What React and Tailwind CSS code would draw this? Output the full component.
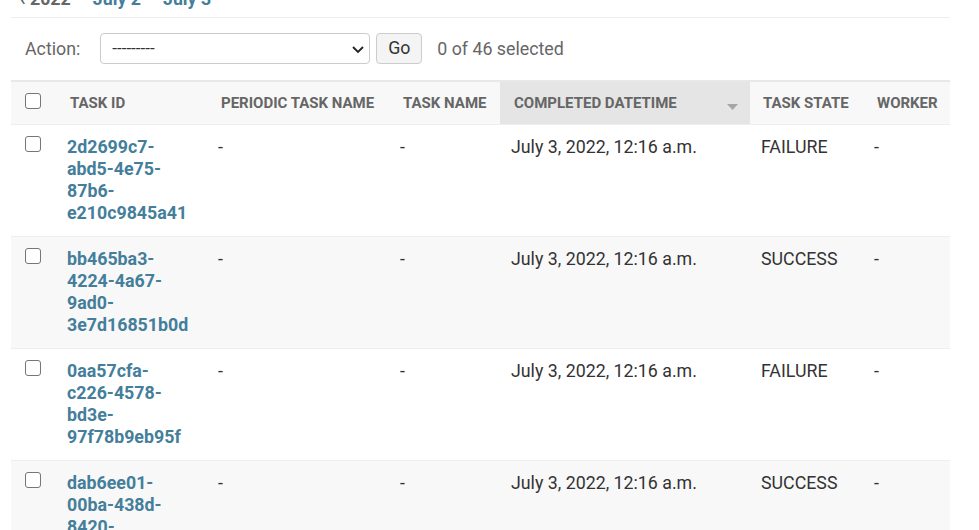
import React from "react";

const rows = [
  { id: "2d2699c7-abd5-4e75-87b6-e210c9845a41", state: "FAILURE" },
  { id: "bb465ba3-4224-4a67-9ad0-3e7d16851b0d", state: "SUCCESS" },
  { id: "0aa57cfa-c226-4578-bd3e-97f78b9eb95f", state: "FAILURE" },
  { id: "dab6ee01-00ba-438d-8420-5c2b1e9a7f34", state: "SUCCESS" },
];

function Box() {
  return (
    <span className="block w-4 h-4 rounded-[3px] border-[1.5px] border-[#767676] bg-white" />
  );
}

export default function App() {
  return (
    <div
      className="min-h-[530px] bg-white text-[#333] overflow-hidden"
      style={{ fontFamily: "Roboto, 'Noto Sans', sans-serif" }}
    >
      <div className="ml-[11px] w-[939px]">
        {/* date hierarchy */}
        <div className="-mt-[12px] h-[30px] border-b border-[#eee] pl-[9px] flex gap-[22px] text-[17.8px] leading-[22px] font-bold">
          <span className="text-[#666]">‹ 2022</span>
          <span className="text-[#447e9b]">July 2</span>
          <span className="text-[#447e9b]">July 3</span>
        </div>

        {/* actions */}
        <div className="h-[62px] flex items-center pl-[14px] text-[17.8px] text-[#666]">
          <span>Action:</span>
          <div className="relative ml-[20px] w-[270px] h-[31px] mt-[-1px]">
            <select className="appearance-none w-full h-full border border-[#ccc] rounded-[4px] bg-white pl-[11px] text-[17px] text-[#333] outline-none">
              <option>---------</option>
            </select>
            <svg
              className="absolute right-[5px] top-[12px] pointer-events-none"
              width="14"
              height="9"
              viewBox="0 0 14 9"
            >
              <path d="M2 2 L7 7 L12 2" fill="none" stroke="#222" strokeWidth="1.8" />
            </svg>
          </div>
          <button className="ml-[6px] w-[46px] h-[31px] mt-[-1px] border border-[#ccc] rounded-[4px] bg-[#f4f4f4] text-[17.8px] text-[#333]">
            Go
          </button>
          <span className="ml-[15px]">0 of 46 selected</span>
        </div>

        {/* table */}
        <table className="table-fixed w-[939px] border-collapse border-t-2 border-[#e8e8e8]">
          <colgroup>
            <col className="w-[44px]" />
            <col className="w-[152px]" />
            <col className="w-[182px]" />
            <col className="w-[111px]" />
            <col className="w-[250px]" />
            <col className="w-[113px]" />
            <col className="w-[87px]" />
          </colgroup>
          <thead>
            <tr className="bg-[#f8f8f8] border-b border-[#eee] text-left text-[15px] leading-[22px] font-bold uppercase text-[#666]">
              <th className="h-[43px] pl-[14px] align-top pt-[11px]">
                <Box />
              </th>
              <th className="pl-[15px] py-[10px] font-bold whitespace-nowrap">Task ID</th>
              <th className="pl-[14px] py-[10px] font-bold whitespace-nowrap">Periodic task name</th>
              <th className="pl-[14px] py-[10px] font-bold whitespace-nowrap">Task name</th>
              <th className="relative pl-[14px] py-[10px] font-bold whitespace-nowrap bg-[#e5e5e5]">
                Completed datetime
                <svg
                  className="absolute right-[12px] top-[22px]"
                  width="11"
                  height="6"
                  viewBox="0 0 11 6"
                >
                  <path d="M0 0 L11 0 L5.5 6 Z" fill="#a6a6a6" />
                </svg>
              </th>
              <th className="pl-[13px] py-[10px] font-bold whitespace-nowrap">Task state</th>
              <th className="pl-[14px] py-[10px] font-bold whitespace-nowrap">Worker</th>
            </tr>
          </thead>
          <tbody className="text-[17.8px] leading-[22px]">
            {rows.map((r, i) => (
              <tr
                key={r.id}
                className={`border-b border-[#eee] align-top ${i % 2 === 1 ? "bg-[#f8f8f8]" : "bg-white"}`}
              >
                <td className="pl-[14px] pt-[11px]">
                  <Box />
                </td>
                <td className="pl-[12px] pr-[16px] pt-[11px] pb-[12px]">
                  <a className="font-bold text-[#447e9b] break-words">{r.id}</a>
                </td>
                <td className="pl-[11px] pt-[11px]">-</td>
                <td className="pl-[11px] pt-[11px]">-</td>
                <td className="pl-[11px] pt-[11px]">July 3, 2022, 12:16 a.m.</td>
                <td className="pl-[11px] pt-[11px]">{r.state}</td>
                <td className="pl-[11px] pt-[11px]">-</td>
              </tr>
            ))}
          </tbody>
        </table>
      </div>
    </div>
  );
}
